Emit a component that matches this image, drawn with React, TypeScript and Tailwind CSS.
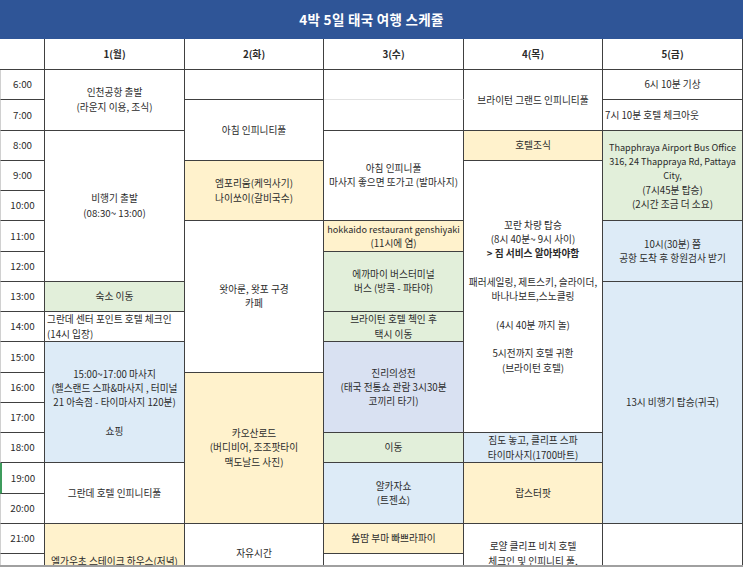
import React from "react";

type Cell = {
  col: string;
  row: string;
  span: string;
  bg?: string;
  left?: boolean;
  extra?: string;
  lines: string[];
};

const Y = "bg-[#FFF2CC]";
const G = "bg-[#E2EFDA]";
const B = "bg-[#DDEBF7]";
const L = "bg-[#D9E1F2]";

const times = [
  "6:00", "7:00", "8:00", "9:00", "10:00", "11:00", "12:00", "13:00", "14:00",
  "15:00", "16:00", "17:00", "18:00", "19:00", "20:00", "21:00", "22:00", "23:00",
];

const rowStarts = [
  "row-start-2", "row-start-3", "row-start-4", "row-start-5", "row-start-6", "row-start-7",
  "row-start-8", "row-start-9", "row-start-10", "row-start-11", "row-start-12", "row-start-13",
  "row-start-14", "row-start-15", "row-start-16", "row-start-17", "row-start-18", "row-start-19",
];

const days = [
  { label: "1(월)", col: "col-start-2" },
  { label: "2(화)", col: "col-start-3" },
  { label: "3(수)", col: "col-start-4" },
  { label: "4(목)", col: "col-start-5" },
  { label: "5(금)", col: "col-start-6" },
];

const cells: Cell[] = [
  // 1(월)
  { col: "col-start-2", row: "row-start-2", span: "row-span-2", lines: ["인천공항 출발", "(라운지 이용, 조식)"] },
  { col: "col-start-2", row: "row-start-4", span: "row-span-5", lines: ["비행기 출발", "(08:30~ 13:00)"] },
  { col: "col-start-2", row: "row-start-9", span: "row-span-1", bg: G, lines: ["숙소 이동"] },
  { col: "col-start-2", row: "row-start-10", span: "row-span-1", left: true, lines: ["그란데 센터 포인트 호텔 체크인", "(14시 입장)"] },
  {
    col: "col-start-2", row: "row-start-11", span: "row-span-4", bg: B,
    lines: ["15:00~17:00 마사지", "(헬스랜드 스파&마사지 , 터미널", "21 아속점 - 타이마사지 120분)", "", "쇼핑"],
  },
  { col: "col-start-2", row: "row-start-15", span: "row-span-2", lines: ["그란데 호텔 인피니티풀"] },
  { col: "col-start-2", row: "row-start-17", span: "row-span-3", bg: Y, extra: "pb-[14px]", lines: ["엘가우초 스테이크 하우스(저녁)"] },

  // 2(화)
  { col: "col-start-3", row: "row-start-2", span: "row-span-1", lines: [] },
  { col: "col-start-3", row: "row-start-3", span: "row-span-2", lines: ["아침 인피니티풀"] },
  { col: "col-start-3", row: "row-start-5", span: "row-span-2", bg: Y, lines: ["엠포리움(케익사기)", "나이쏘이(갈비국수)"] },
  { col: "col-start-3", row: "row-start-7", span: "row-span-5", lines: ["왓아룬, 왓포 구경", "카페"] },
  { col: "col-start-3", row: "row-start-12", span: "row-span-5", bg: Y, lines: ["카오산로드", "(버디비어, 조조팟타이", "맥도날드 사진)"] },
  { col: "col-start-3", row: "row-start-17", span: "row-span-2", lines: ["자유시간"] },

  // 3(수)
  { col: "col-start-4", row: "row-start-2", span: "row-span-1", extra: "border-b-[#e2e2e2]", lines: [] },
  { col: "col-start-4", row: "row-start-3", span: "row-span-1", lines: [] },
  { col: "col-start-4", row: "row-start-4", span: "row-span-3", lines: ["아침 인피니풀", "마사지 좋으면 또가고 (발마사지)"] },
  { col: "col-start-4", row: "row-start-7", span: "row-span-1", bg: Y, lines: ["hokkaido restaurant genshiyaki", "(11시에 염)"] },
  { col: "col-start-4", row: "row-start-8", span: "row-span-2", bg: G, lines: ["에까마이 버스터미널", "버스 (방콕 - 파타야)"] },
  { col: "col-start-4", row: "row-start-10", span: "row-span-1", bg: G, lines: ["브라이턴 호텔 첵인 후", "택시 이동"] },
  { col: "col-start-4", row: "row-start-11", span: "row-span-3", bg: L, lines: ["진리의성전", "(태국 전통쇼 관람 3시30분", "코끼리 타기)"] },
  { col: "col-start-4", row: "row-start-14", span: "row-span-1", bg: G, lines: ["이동"] },
  { col: "col-start-4", row: "row-start-15", span: "row-span-2", bg: B, lines: ["알카자쇼", "(트젠쇼)"] },
  { col: "col-start-4", row: "row-start-17", span: "row-span-1", bg: Y, lines: ["쏨땀 부마 빠쁘라파이"] },
  { col: "col-start-4", row: "row-start-18", span: "row-span-2", lines: [] },

  // 4(목)
  { col: "col-start-5", row: "row-start-2", span: "row-span-2", lines: ["브라이턴 그랜드 인피니티풀"] },
  { col: "col-start-5", row: "row-start-4", span: "row-span-1", bg: Y, lines: ["호텔조식"] },
  {
    col: "col-start-5", row: "row-start-5", span: "row-span-9",
    lines: [
      "꼬란 차량 탑승",
      "(8시 40분~ 9시 사이)",
      "> 짐 서비스 알아봐야함",
      "",
      "패러세일링, 제트스키, 슬라이더,",
      "바나나보트,스노클링",
      "",
      "(4시 40분 까지 놀)",
      "",
      "5시전까지 호텔 귀환",
      "(브라이턴 호텔)",
    ],
  },
  { col: "col-start-5", row: "row-start-14", span: "row-span-1", bg: B, lines: ["짐도 놓고, 클리프 스파", "타이마사지(1700바트)"] },
  { col: "col-start-5", row: "row-start-15", span: "row-span-2", bg: Y, lines: ["랍스터팟"] },
  { col: "col-start-5", row: "row-start-17", span: "row-span-2", lines: ["로얄 클리프 비치 호텔", "체크인 및 인피니티 풀,"] },

  // 5(금)
  { col: "col-start-6", row: "row-start-2", span: "row-span-1", lines: ["6시 10분 기상"] },
  { col: "col-start-6", row: "row-start-3", span: "row-span-1", left: true, lines: ["7시 10분 호텔 체크아웃"] },
  {
    col: "col-start-6", row: "row-start-4", span: "row-span-3", bg: G,
    lines: ["Thapphraya Airport Bus Office", "316, 24 Thappraya Rd, Pattaya", "City,", "(7시45분 탑승)", "(2시간 조금 더 소요)"],
  },
  { col: "col-start-6", row: "row-start-7", span: "row-span-2", bg: B, lines: ["10시(30분) 쯤", "공항 도착 후 항원검사 받기"] },
  { col: "col-start-6", row: "row-start-9", span: "row-span-8", bg: B, lines: ["13시 비행기 탑승(귀국)"] },
  { col: "col-start-6", row: "row-start-17", span: "row-span-2", lines: [] },
];

const latin = /[A-Za-z]/;

const App: React.FC = () => {
  return (
    <div className="w-[743px] h-[567px] overflow-hidden bg-white flex flex-col border-b-2 border-[#a0a0a0] font-['Noto_Sans_CJK_KR','Noto_Sans',sans-serif] text-[#2b2b2b]">
      {/* Title */}
      <div className="h-[39px] shrink-0 bg-[#2F5597] flex items-center justify-center">
        <h1 className="text-[13.5px] font-bold text-white tracking-[0.3px]">4박 5일 태국 여행 스케쥴</h1>
      </div>

      {/* Schedule grid */}
      <div className="grid grid-cols-[45px_140px_139px_140px_139px_140px] grid-rows-[31px_repeat(18,30.25px)] text-[9.7px] leading-[14.3px]">
        <div className="col-start-1 row-start-1 border-r border-b border-[#404040]" />
        {days.map((d) => (
          <div
            key={d.label}
            className={`${d.col} row-start-1 border-r border-b border-[#404040] flex items-center justify-center text-[9.8px] font-bold`}
          >
            {d.label}
          </div>
        ))}

        {times.map((t, i) => (
          <div
            key={t}
            className={`col-start-1 ${rowStarts[i]} border-r border-b border-[#404040] flex items-center justify-center text-[9.8px] ${
              t === "19:00" ? "border-l-2 border-l-[#3d9b5c]" : "border-l border-l-[#d0d0d0]"
            }`}
          >
            {t}
          </div>
        ))}

        {cells.map((c, i) => (
          <div
            key={i}
            className={`${c.col} ${c.row} ${c.span} ${c.bg ?? "bg-white"} border-r border-b border-[#404040] flex flex-col justify-center ${
              c.left ? "items-start text-left pl-[2px]" : "items-center text-center"
            } ${c.extra ?? ""}`}
          >
            {c.lines.map((l, j) =>
              l === "" ? (
                <div key={j} className="h-[14.3px]" />
              ) : (
                <div
                  key={j}
                  className={`whitespace-nowrap ${l.startsWith(">") ? "font-bold" : ""} ${latin.test(l) ? "text-[9.1px]" : ""}`}
                >
                  {l}
                </div>
              )
            )}
          </div>
        ))}
      </div>
    </div>
  );
};

export default App;
